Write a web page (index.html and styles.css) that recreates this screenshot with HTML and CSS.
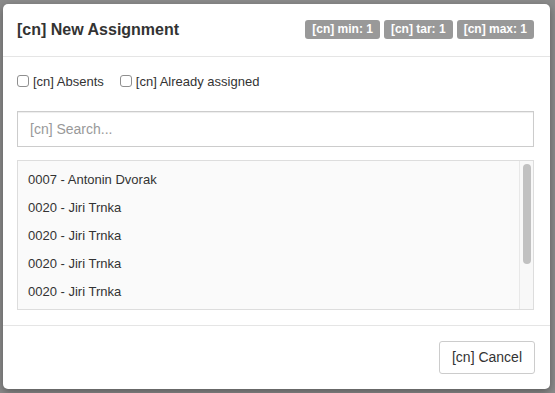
FILE: index.html
```html
<!DOCTYPE html>
<html lang="en">
<head>
    <meta charset="UTF-8">
    <meta name="viewport" content="width=device-width, initial-scale=1.0">
    <title>[cn] New Assignment</title>
    <link rel="stylesheet" href="styles.css">
</head>
<body>
    <div class="modal">
        <div class="modal-header">
            <h4 class="modal-title">[cn] New Assignment</h4>
            <div class="badges">
                <span class="badge">[cn] min: 1</span>
                <span class="badge">[cn] tar: 1</span>
                <span class="badge">[cn] max: 1</span>
            </div>
        </div>

        <div class="modal-body">
            <div class="filters">
                <label class="check"><input type="checkbox"> [cn] Absents</label>
                <label class="check"><input type="checkbox"> [cn] Already assigned</label>
            </div>

            <input class="search" type="text" placeholder="[cn] Search...">

            <div class="list">
                <div class="list-items">
                    <div class="list-item">0007 - Antonin Dvorak</div>
                    <div class="list-item">0020 - Jiri Trnka</div>
                    <div class="list-item">0020 - Jiri Trnka</div>
                    <div class="list-item">0020 - Jiri Trnka</div>
                    <div class="list-item">0020 - Jiri Trnka</div>
                </div>
                <!-- scrollbar -->
                <div class="scroll-track">
                    <div class="scroll-thumb"></div>
                </div>
            </div>
        </div>

        <div class="modal-footer">
            <button class="btn" type="button">[cn] Cancel</button>
        </div>
    </div>
</body>
</html>
```

FILE: styles.css
```css
body {
    margin: 0;
    padding: 4px 5px 4px 3px;
    background: #8b8b8b;
    font-family: "Liberation Sans", Arial, sans-serif;
    color: #333;
    font-size: 13px;
}

.modal {
    width: 547px;
    height: 385px;
    background: #fff;
    border-radius: 5px;
    box-shadow: 0 3px 8px rgba(0, 0, 0, 0.35);
    display: flex;
    flex-direction: column;
    box-sizing: border-box;
}

.modal-header {
    display: flex;
    align-items: center;
    justify-content: space-between;
    padding: 15px 16px 15px 14px;
    border-bottom: 1px solid #e5e5e5;
}

.modal-title {
    margin: 0;
    font-size: 16px;
    font-weight: bold;
    line-height: 22px;
}

.badges {
    display: flex;
    gap: 4px;
    margin-top: -1px;
}

.badge {
    background: #999;
    color: #fff;
    font-size: 12px;
    font-weight: bold;
    line-height: 12px;
    padding: 3px 7px 4px;
    border-radius: 3px;
}

.modal-body {
    padding: 15px 16px 15px 14px;
    flex: 1;
}

.filters {
    display: flex;
    gap: 16px;
    height: 18px;
    align-items: center;
    margin-bottom: 21px;
}

.check {
    display: flex;
    align-items: center;
    gap: 4px;
}

.check input {
    appearance: none;
    -webkit-appearance: none;
    width: 12px;
    height: 12px;
    margin: 0;
    border: 1px solid #8f8f8f;
    border-radius: 3px;
    background: #fff;
}

.search {
    display: block;
    width: 100%;
    height: 36px;
    box-sizing: border-box;
    padding: 6px 12px;
    border: 1px solid #ccc;
    border-radius: 0;
    font-family: inherit;
    font-size: 14px;
    color: #555;
    box-shadow: inset 0 1px 1px rgba(0, 0, 0, 0.075);
    outline: none;
    margin-bottom: 13px;
}

.search::placeholder {
    color: #999;
}

.list {
    display: flex;
    height: 150px;
    box-sizing: border-box;
    border: 1px solid #ddd;
    background: #fafafa;
    overflow: hidden;
}

.list-items {
    flex: 1;
    padding-top: 5px;
}

.list-item {
    height: 28px;
    line-height: 28px;
    padding-left: 10px;
}

.scroll-track {
    width: 14px;
    border-left: 1px solid #e8e8e8;
    background: #f8f8f8;
    padding: 3px 0 0 3px;
    box-sizing: border-box;
}

.scroll-thumb {
    width: 8px;
    height: 100px;
    background: #c1c1c1;
    border-radius: 4px;
}

.modal-footer {
    display: flex;
    justify-content: flex-end;
    padding: 15px 15px 15px 14px;
    border-top: 1px solid #e5e5e5;
}

.btn {
    font-family: inherit;
    font-size: 14px;
    line-height: 19px;
    color: #333;
    background: #fff;
    border: 1px solid #ccc;
    border-radius: 3px;
    padding: 6px 12px;
}
```
